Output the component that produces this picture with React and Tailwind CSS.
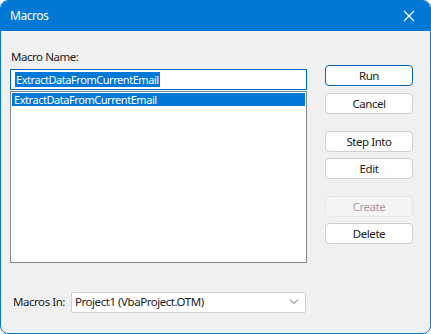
import React from "react";

const font = { fontFamily: '"Segoe UI", "Noto Sans", "Open Sans", sans-serif' };

function Btn({ children, className = "", disabled = false, primary = false }) {
  return (
    <div
      className={
        "w-[88px] h-[21px] rounded-[4px] border flex items-center justify-center text-[11.5px] leading-none " +
        (disabled
          ? "bg-[#f5f5f5] border-[#e5e5e5] text-[#a0a0a0] "
          : primary
          ? "bg-[#fdfdfd] border-[#0067c0] text-[#1b1b1b] "
          : "bg-[#fdfdfd] border-[#d0d0d0] text-[#1b1b1b] ") +
        className
      }
    >
      {children}
    </div>
  );
}

export default function App() {
  return (
    <div className="w-[431px] h-[334px] bg-white tracking-[-0.45px]" style={font}>
      <div className="w-[431px] h-[334px] rounded-[8px] border border-[#0078d4] overflow-hidden flex flex-col bg-[#f0f0f0]">
        <div className="h-[30px] bg-[#0078d4] flex items-center justify-between pl-[9px] pr-[15px] shrink-0">
          <span className="text-white text-[12px] leading-none">Macros</span>
          <svg width="12" height="12" viewBox="0 0 12 12">
            <path d="M1 1 L11 11 M11 1 L1 11" stroke="white" strokeWidth="1.1" fill="none" />
          </svg>
        </div>
        <div className="flex flex-1">
          <div className="w-[297px] ml-[9px] flex flex-col">
            <div className="mt-[20px] text-[11.5px] leading-none text-[#1b1b1b] pl-[1px]">Macro Name:</div>
            <div className="mt-[6px] h-[21px] bg-white border border-[#0067c0] flex items-center pl-[4px]">
              <span className="bg-[#0078d7] text-white text-[11px] leading-[15px] px-[1px]">ExtractDataFromCurrentEmail</span>
            </div>
            <div className="mt-[1px] h-[172px] bg-white border border-[#828790] p-[1px]">
              <div className="h-[13px] bg-[#0078d7] text-white text-[11px] leading-[13px] pl-[2px]">ExtractDataFromCurrentEmail</div>
            </div>
            <div className="mt-[29px] flex items-center">
              <span className="text-[11.5px] leading-none text-[#1b1b1b] ml-[3px] w-[58px] whitespace-nowrap">Macros In:</span>
              <div className="w-[235px] h-[21px] bg-white border border-[#d0d0d0] rounded-[2px] flex items-center justify-between pl-[3px] pr-[6px]">
                <span className="text-[11.5px] leading-none text-[#1b1b1b]">Project1 (VbaProject.OTM)</span>
                <svg width="10" height="6" viewBox="0 0 10 6">
                  <path d="M1 0.5 L5 4.5 L9 0.5" stroke="#606060" strokeWidth="1" fill="none" />
                </svg>
              </div>
            </div>
          </div>
          <div className="ml-[18px] flex flex-col">
            <Btn primary className="mt-[34px]">Run</Btn>
            <Btn className="mt-[7px]">Cancel</Btn>
            <Btn className="mt-[17px]">Step Into</Btn>
            <Btn className="mt-[6px]">Edit</Btn>
            <Btn disabled className="mt-[17px]">Create</Btn>
            <Btn className="mt-[6px]">Delete</Btn>
          </div>
        </div>
      </div>
    </div>
  );
}
